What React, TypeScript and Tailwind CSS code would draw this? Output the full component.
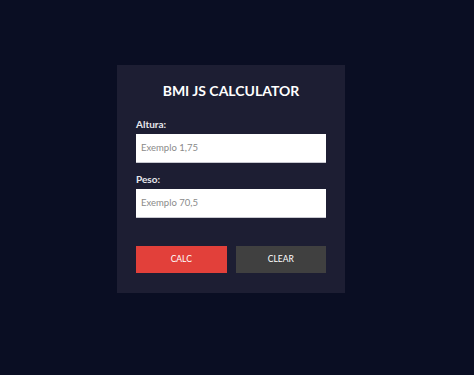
import React from "react";

export default function App() {
  return (
    <div className="w-[474px] h-[375px] bg-[#0a0e23] flex" style={{ fontFamily: "Lato, 'Noto Sans', sans-serif" }}>
      <div className="ml-[117px] mt-[65px] w-[228px] h-[228px] bg-[#1d1e33] px-[19px] pt-[18px] flex flex-col">
        <h1 className="text-[14px] leading-[1.2] font-bold text-white text-center">BMI JS CALCULATOR</h1>
        <label className="mt-[18px] text-[10px] leading-[1.2] font-bold text-[#e8e8ee]">Altura:</label>
        <input
          className="mt-[4px] h-[29px] w-full bg-white px-[5px] text-[9.5px] text-[#333] placeholder:text-[#8a8a8a] outline-none border-b border-[#c8c8d0]"
          placeholder="Exemplo 1,75"
        />
        <label className="mt-[10px] text-[10px] leading-[1.2] font-bold text-[#e8e8ee]">Peso:</label>
        <input
          className="mt-[4px] h-[29px] w-full bg-white px-[5px] text-[9.5px] text-[#333] placeholder:text-[#8a8a8a] outline-none border-b border-[#c8c8d0]"
          placeholder="Exemplo 70,5"
        />
        <div className="mt-[28px] flex gap-[9px]">
          <button className="flex-1 h-[27px] bg-[#e2403a] text-white text-[8.5px] leading-none">CALC</button>
          <button className="flex-1 h-[27px] bg-[#404040] text-white text-[8.5px] leading-none">CLEAR</button>
        </div>
      </div>
    </div>
  );
}
